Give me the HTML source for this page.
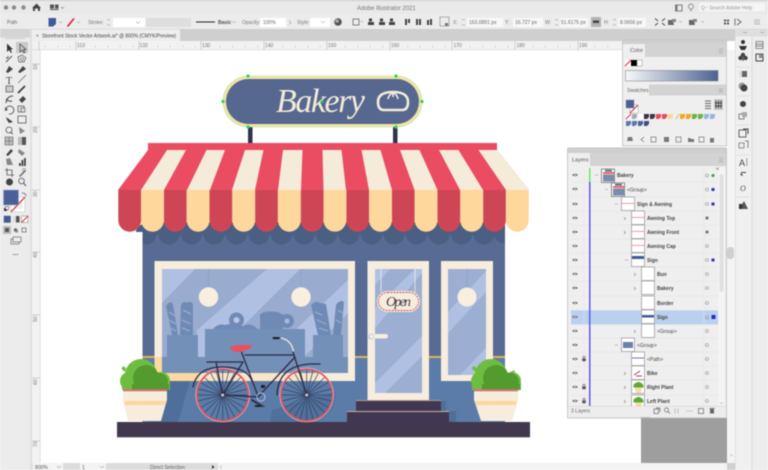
<!DOCTYPE html>
<html><head><meta charset="utf-8"><style>
html,body{margin:0;padding:0;background:#fff;width:768px;height:470px;overflow:hidden}
svg{display:block;filter:blur(.45px)}
text{font-family:"Liberation Sans",sans-serif}
.t{font-size:5px;fill:#666}
.l{font-size:5px;fill:#444;font-weight:bold}
.r{font-size:5px;fill:#777}
.ic{fill:#444}
</style></head><body>
<svg width="768" height="470" viewBox="0 0 768 470" xmlns="http://www.w3.org/2000/svg">
<defs>
<g id="eye"><path d="M-3 0Q0-2.400 3 0Q0 2.400-3 0Z" fill="#666"/><circle r=".8" fill="#eee"/></g>
<g id="lock"><rect x="-1.800" y="-.6" width="3.600" height="2.800" fill="#555"/><path d="M-1.100-.6V-1.600A1.100 1.100 0 0 1 1.100-1.600V-.6" fill="none" stroke="#555" stroke-width=".6"/></g>
<circle id="o" r="1.500" fill="none" stroke="#888" stroke-width=".6"/>
<g id="thA"><rect x="-.5" y="0" width="13" height="13.500" fill="#fff" stroke="#8a8a8a" stroke-width="1"/><rect x="1" y="3" width="11" height="2" fill="#e66"/><rect x="1" y="5.500" width="11" height="7" fill="#7a8cb0"/><rect x="3" y=".8" width="7" height="1.800" fill="#56688f"/></g>
<g id="thW"><rect x="-.5" y="0" width="13" height="13.500" fill="#fff" stroke="#a8a8a8" stroke-width=".9"/></g>
<g id="thR"><rect x="-.5" y="0" width="13" height="13.500" fill="#fff" stroke="#a8a8a8" stroke-width=".9"/><rect x="0" y="6" width="12" height=".8" fill="#e88"/></g>
<g id="thP"><rect x="-.5" y="0" width="13" height="13.500" fill="#fff" stroke="#a8a8a8" stroke-width=".9"/><path d="M1.500 7.500Q1 3 4 3Q6 1 8.500 2.500Q12 4 11.500 7.500Z" fill="#5fa83c"/><path d="M3 7.500H10L9 13H4Z" fill="#fbdca0"/></g>
<clipPath id="glass1"><rect x="162" y="269" width="186" height="104"/></clipPath>
<clipPath id="glass2"><rect x="375" y="269" width="47" height="124"/></clipPath>
<clipPath id="glass3"><rect x="448" y="269" width="38" height="106"/></clipPath>
<clipPath id="pl"><rect x="100" y="340" width="100" height="50"/></clipPath>
<clipPath id="pr"><rect x="450" y="340" width="100" height="50"/></clipPath>
</defs>

<rect width="768" height="470" fill="#fff"/>

<!-- sign -->
<rect x="248" y="125" width="4.500" height="20" fill="#2f3350"/>
<rect x="393" y="125" width="4.500" height="20" fill="#2f3350"/>
<rect x="223" y="76" width="199" height="51" rx="25.500" fill="#f3e3a6" stroke="#a8e89a" stroke-width=".6"/>
<rect x="226" y="79" width="193" height="45" rx="22.500" fill="#56688f"/>
<text x="276" y="112" font-size="34" style="font-family:'Liberation Serif',serif;font-style:italic" fill="#f3ebd8" textLength="89">Bakery</text>
<path d="M384 110H402Q408 110 408 102Q408 92 393 92Q378 92 378 102Q378 110 384 110Z" fill="none" stroke="#f3ebd8" stroke-width="2.600"/>
<path d="M388 99Q389 94 393 93Q397 94 398 99M393 93V97" stroke="#f3ebd8" stroke-width="1.600" fill="none"/>
<g fill="#2fd24a"><circle cx="248" cy="76" r="1.600"/><circle cx="396" cy="76" r="1.600"/><circle cx="223" cy="101.500" r="1.600"/><circle cx="422" cy="101.500" r="1.600"/><circle cx="322" cy="101.500" r="1.400"/><circle cx="248" cy="127" r="1.600"/><circle cx="396" cy="127" r="1.600"/></g>

<!-- building -->
<rect x="142.500" y="222" width="362.500" height="200" fill="#586b95"/>
<rect x="142.500" y="357" width="362.500" height="65" fill="#5b7ca8"/>
<rect x="142.500" y="356" width="362.500" height="2" fill="#e0b45a"/>
<path d="M190 381H160L149 422H178Z" fill="#4f6e9a"/>
<g fill="#4a5f82">
<rect x="142.500" y="222" width="362.500" height="13"/>
<circle cx="146" cy="234" r="10.500"/><circle cx="169" cy="234" r="10.500"/><circle cx="191.500" cy="234" r="10.500"/><circle cx="214" cy="234" r="10.500"/><circle cx="236.500" cy="234" r="10.500"/><circle cx="259" cy="234" r="10.500"/><circle cx="281.500" cy="234" r="10.500"/><circle cx="304" cy="234" r="10.500"/><circle cx="326.500" cy="234" r="10.500"/><circle cx="349" cy="234" r="10.500"/><circle cx="371.500" cy="234" r="10.500"/><circle cx="394" cy="234" r="10.500"/><circle cx="416.500" cy="234" r="10.500"/><circle cx="439" cy="234" r="10.500"/><circle cx="461.500" cy="234" r="10.500"/><circle cx="484" cy="234" r="10.500"/><circle cx="503" cy="234" r="9"/>
</g>
<rect x="505" y="220" width="12" height="30" fill="#fff"/>
<rect x="130" y="232" width="12.500" height="20" fill="#fff"/>

<!-- awning -->
<path d="M148 143H497V150L529 190H118L148 150Z" fill="#ea4c62"/>
<g fill="#f5ebd9">
<path d="M167 150H186L164 190H141Z"/>
<path d="M206.500 150H225L210 190H187Z"/>
<path d="M245 150H263.500L255 190H232Z"/>
<path d="M283 150H302.500L301 190H278Z"/>
<path d="M322.500 150H341.500L346 190H323.500Z"/>
<path d="M361.500 150H380.500L392 190H369Z"/>
<path d="M400 150H419.500L437.500 190H414.500Z"/>
<path d="M439 150H458.500L483 190H460Z"/>
<path d="M478.500 150H497L529 190H506Z"/>
</g>
<g fill="#ce4656">
<path d="M118.300 190H141.100V220.300A11.400 11.400 0 0 1 118.300 220.300Z"/>
<path d="M163.900 190H186.700V220.300A11.400 11.400 0 0 1 163.900 220.300Z"/>
<path d="M209.500 190H232.300V220.300A11.400 11.400 0 0 1 209.500 220.300Z"/>
<path d="M255.100 190H277.900V220.300A11.400 11.400 0 0 1 255.100 220.300Z"/>
<path d="M300.700 190H323.500V220.300A11.400 11.400 0 0 1 300.700 220.300Z"/>
<path d="M346.300 190H369.100V220.300A11.400 11.400 0 0 1 346.300 220.300Z"/>
<path d="M391.900 190H414.700V220.300A11.400 11.400 0 0 1 391.900 220.300Z"/>
<path d="M437.500 190H460.300V220.300A11.400 11.400 0 0 1 437.500 220.300Z"/>
<path d="M483.100 190H505.900V220.300A11.400 11.400 0 0 1 483.100 220.300Z"/>
</g>
<g fill="#fdd79c">
<path d="M141.100 190H163.900V220.300A11.400 11.400 0 0 1 141.100 220.300Z"/>
<path d="M186.700 190H209.500V220.300A11.400 11.400 0 0 1 186.700 220.300Z"/>
<path d="M232.300 190H255.100V220.300A11.400 11.400 0 0 1 232.300 220.300Z"/>
<path d="M277.900 190H300.700V220.300A11.400 11.400 0 0 1 277.900 220.300Z"/>
<path d="M323.500 190H346.300V220.300A11.400 11.400 0 0 1 323.500 220.300Z"/>
<path d="M369.100 190H391.900V220.300A11.400 11.400 0 0 1 369.100 220.300Z"/>
<path d="M414.700 190H437.500V220.300A11.400 11.400 0 0 1 414.700 220.300Z"/>
<path d="M460.300 190H483.100V220.300A11.400 11.400 0 0 1 460.300 220.300Z"/>
<path d="M505.900 190H528.700V220.300A11.400 11.400 0 0 1 505.900 220.300Z"/>
</g>

<!-- main window -->
<rect x="154.500" y="261" width="200.500" height="120" fill="#f6eddd"/>
<path d="M154.500 357H162V373H200V381H154.500Z" fill="#fdd9a0"/>
<rect x="200" y="373" width="120" height="8" fill="#f9e6c6"/>
<g clip-path="url(#glass1)">
<rect x="162" y="269" width="186" height="104" fill="#99acd0"/>
<path d="M162 269H195L162 303Z" fill="#b0c0e3"/>
<path d="M267 269H300L197 372V330Z" fill="#b0c0e3"/>
<path d="M348 280V313L300 361H290V335Z" fill="#b0c0e3"/>
<g fill="#6f8bb5">
<path d="M166 306Q170 300 173 304L178 335H172Z"/>
<path d="M181 305Q184 300 187 303Q190 300 193 304V335H180Z"/>
<path d="M311 305Q316 300 320 303L326 304L331 335H318Z"/>
<path d="M336 305Q340 299 344 302L341 335H333Z"/>
<circle cx="236.500" cy="320" r="7.500"/>
<path d="M213 329Q218 323 225 325Q234 322 243 326Q250 322 258 329Z"/>
<path d="M260 314H283V329H260Z"/>
<ellipse cx="271" cy="314" rx="10" ry="2.500"/>
<circle cx="287" cy="321" r="7"/>
</g>
<circle cx="236.500" cy="320" r="3" fill="#b9c7e4"/><circle cx="287" cy="321" r="2.500" fill="#a8b9da"/>
<path d="M169 312L175 316M169 320L176 324M170 328L176 331M183 310L191 314M182 320L191 324M182 328L190 331M315 312L322 315M317 320L326 324M319 328L328 331M338 310L343 313M336 320L341 323" stroke="#93a8cd" stroke-width="1.400"/>
<g fill="#7390b9">
<rect x="167" y="335" width="31" height="27"/>
<rect x="205" y="329" width="100" height="33"/>
<rect x="313" y="335" width="30" height="27"/>
<rect x="162" y="357" width="186" height="16"/>
</g>
<path d="M208.500 269V290M301 269V290" stroke="#8ea1c4" stroke-width=".7"/>
<circle cx="208.500" cy="297" r="9.700" fill="#f8efdf"/>
<circle cx="301" cy="297" r="9.700" fill="#f8efdf"/>
</g>

<!-- door -->
<rect x="367.500" y="261" width="61.500" height="140" fill="#f6eddd"/>
<g clip-path="url(#glass2)">
<rect x="375" y="269" width="47" height="124" fill="#9cafd3"/>
<path d="M375 269H390L375 285ZM415 269H422V273L375 328V308Z" fill="#b0c0e3"/>
<path d="M422 336V356L385 393H375V383Z" fill="#b0c0e3"/>
</g>
<path d="M381 269V292M415 269V292" stroke="#f6eddd" stroke-width=".8"/>
<rect x="377" y="291" width="43" height="21" rx="10.500" fill="#f6eddd"/>
<rect x="378.500" y="292.500" width="40" height="18" rx="9" fill="none" stroke="#d2495c" stroke-width=".9" stroke-dasharray="2 1"/>
<text x="398.500" y="306" text-anchor="middle" font-size="14" style="font-family:'Liberation Serif',serif;font-style:italic" fill="#4a4050" textLength="25">Open</text>
<rect x="369" y="334" width="19" height="4.500" rx="2.200" fill="#f6eddd"/>
<circle cx="371" cy="336.500" r="3" fill="#c5d0ea"/>
<circle cx="371.500" cy="336.500" r="1.800" fill="#f6eddd"/>

<!-- right window -->
<rect x="441" y="261" width="52" height="120" fill="#f6eddd"/>
<g clip-path="url(#glass3)">
<rect x="448" y="269" width="38" height="106" fill="#9cafd3"/>
<path d="M486 271V292L448 333V312Z" fill="#b0c0e3"/>
<path d="M486 348V362L473 375H460Z" fill="#b0c0e3"/>
</g>
<path d="M467 269V288" stroke="#8ea1c4" stroke-width=".7"/>
<circle cx="467" cy="297" r="9.500" fill="#f8efdf"/>

<!-- steps -->
<rect x="440" y="401" width="6" height="11" fill="#4f6e9a"/>
<rect x="449" y="411" width="7" height="11" fill="#4f6e9a"/>
<rect x="356" y="400" width="85" height="11" fill="#413752"/>
<rect x="356" y="400" width="85" height="1" fill="#b59b85"/>
<rect x="347" y="411" width="102" height="11" fill="#413752"/>
<rect x="347" y="411" width="102" height="1" fill="#c9ae93"/>
<rect x="117" y="422" width="413" height="15" fill="#41374f"/>
<rect x="117" y="437" width="413" height=".7" fill="#aaa"/>

<!-- bike shadow -->
<path d="M335 392A26 26 0 0 1 320 419L300 422H270L272 410Z" fill="#50709c"/>
<!-- bike -->
<g fill="none" stroke-linecap="round">
<g stroke="#34405f" stroke-width=".7">
<path d="M222.700 395L222.700 370M222.700 395L235 372M222.700 395L245 382M222.700 395L248.500 395M222.700 395L245 408M222.700 395L235 418M222.700 395V420M222.700 395L210 418M222.700 395L200 408M222.700 395H197M222.700 395L200 382M222.700 395L210 372"/>
<path d="M222.700 395L229 370.500M222.700 395L241 377M222.700 395L247.500 389M222.700 395L247.500 401M222.700 395L241 413M222.700 395L229 419.500M222.700 395L216 419.500M222.700 395L204 413M222.700 395L198 401M222.700 395L198 389M222.700 395L204 377M222.700 395L216 370.500"/>
<path d="M306.700 395V370M306.700 395L319 372M306.700 395L329 382M306.700 395H332M306.700 395L329 408M306.700 395L319 418M306.700 395V420M306.700 395L294 418M306.700 395L284 408M306.700 395H281M306.700 395L284 382M306.700 395L294 372"/>
<path d="M306.700 395L313 370.500M306.700 395L325 377M306.700 395L331.500 389M306.700 395L331.500 401M306.700 395L325 413M306.700 395L313 419.500M306.700 395L300 419.500M306.700 395L288 413M306.700 395L282 401M306.700 395L282 389M306.700 395L288 377M306.700 395L300 370.500"/>
</g>
<circle cx="222.700" cy="395" r="25.800" stroke="#e8505f" stroke-width="1.700"/>
<circle cx="306.700" cy="395" r="25.800" stroke="#e8505f" stroke-width="1.700"/>
<circle cx="222.700" cy="395" r="27" stroke="#f3e6d6" stroke-width=".5"/>
<circle cx="306.700" cy="395" r="27" stroke="#f3e6d6" stroke-width=".5"/>
<g stroke="#2c2a45" stroke-width="1.300">
<path d="M193 387Q197 367 222 367Q247 367 252 381"/>
<path d="M277 395Q278 366 310 364Q316 364 320 364"/>
<path d="M207 362H243"/>
<path d="M216 362L222.700 395M243 362L222.700 395"/>
<path d="M241.500 352L258 396"/>
<path d="M245 355H294"/>
<path d="M293 352L306.700 395"/>
<path d="M295 357L258 397"/>
<path d="M222.700 395L258 397"/>
<path d="M273 338H281"/>
</g>
<path d="M281 338Q291 340 293.500 351" stroke="#f3ebd8" stroke-width="1.300"/>
<path d="M252 400L262 406H257" stroke="#2c2a45" stroke-width="1.800"/>
<circle cx="261" cy="397" r="4" stroke="#b6c2da" stroke-width="1" stroke-dasharray="1 .8"/>
</g>
<path d="M230 347Q238 344 252.500 345Q251 349 246 350Q244 352 238 352Q231 352 230 347Z" fill="#e9505f"/>
<circle cx="222.700" cy="395" r="1.500" fill="#ccc"/><circle cx="306.700" cy="395" r="1.500" fill="#ccc"/>
<rect x="273" y="337" width="6" height="2.200" fill="#222"/>
<rect x="255" y="405" width="5" height="2" fill="#222"/>
<rect x="261" y="385" width="4" height="3" fill="#222"/>

<!-- left plant -->
<g clip-path="url(#pl)">
<g fill="#6fbd40"><circle cx="141" cy="375" r="16"/><circle cx="129" cy="381" r="9"/><circle cx="161" cy="381" r="9"/><rect x="122" y="382" width="48" height="8"/></g>
<g fill="#539a2f"><circle cx="146" cy="378" r="13"/><circle cx="159" cy="382" r="9"/><rect x="132" y="384" width="37" height="6"/></g>
</g>
<path d="M121.500 369L125 372L126 368L123 366Z" fill="#6fbd40"/>
<path d="M123 390H167V400L161 421H128L123 400Z" fill="#f6eddd"/>
<rect x="123" y="389.500" width="44" height="1.800" fill="#e8697a"/>
<path d="M124 401H166L165 405H125Z" fill="#fdd79c"/>

<!-- right plant -->
<g clip-path="url(#pr)">
<g fill="#6fbd40"><circle cx="491" cy="375" r="16"/><circle cx="480" cy="381" r="9"/><circle cx="512" cy="381" r="9"/><rect x="472" y="382" width="49" height="8"/></g>
<g fill="#539a2f"><circle cx="496" cy="378" r="13"/><circle cx="510" cy="382" r="9"/><rect x="482" y="384" width="38" height="6"/></g>
</g>
<path d="M472 369L476 372L477 368L473 366ZM510 372L515 370L514 374Z" fill="#6fbd40"/>
<path d="M474 390H518V400L512 421H481L474 400Z" fill="#f6eddd"/>
<rect x="474" y="389.500" width="44" height="1.800" fill="#e8697a"/>
<path d="M475 401H517L516 405H476Z" fill="#fdd79c"/>

<rect x="641" y="418" width="86" height="45" fill="#9e9e9e"/>

<!-- top chrome -->
<rect width="768" height="14" fill="#e9e9e9"/>
<rect width="768" height=".8" fill="#bbb"/>
<circle cx="6" cy="7.500" r="2.200" fill="#8a8a8a"/><circle cx="14" cy="7.500" r="2.200" fill="#8a8a8a"/><circle cx="23.500" cy="7.500" r="2.200" fill="#8a8a8a"/>
<path d="M36.500 3.500L41 8H40V11H38V8.500H35V11H33V8H32Z" fill="#444"/>
<rect x="50" y="4.500" width="4" height="4" fill="#555"/><rect x="55" y="4.500" width="3.500" height="4" fill="#555"/><rect x="50" y="9" width="8.500" height="1" fill="#555"/>
<path d="M61 7L62.500 8.500L64 7" fill="none" stroke="#777" stroke-width=".6"/>
<text x="357" y="10" font-size="6" fill="#777">Adobe Illustrator 2021</text>
<rect x="675.500" y="5" width="6.500" height="6" fill="none" stroke="#666" stroke-width=".8"/><rect x="675.500" y="5" width="2" height="6" fill="#777"/>
<circle cx="691" cy="6.500" r="2.500" fill="none" stroke="#777" stroke-width=".7"/><path d="M690 10.500H692" stroke="#777" stroke-width=".8"/>
<rect x="699" y="3" width="66" height="8.500" rx="1" fill="#f5f5f5"/>
<text x="701" y="9.500" font-size="5" fill="#999">Q~ Search Adobe Help</text>

<rect y="14" width="768" height="15" fill="#ececec"/>
<rect y="29" width="768" height=".5" fill="#ccc"/>
<text x="7" y="24" class="t">Path</text>
<path d="M48.500 18H56V24L53 26.500H48.500Z" fill="#3f5a9a"/>
<path d="M59 21.500L60.500 23L62 21.500M77 21.500L78.500 23L80 21.500" fill="none" stroke="#888" stroke-width=".5"/>
<path d="M67.500 26.500L74 18.500" stroke="#d22a3a" stroke-width="1.700"/>
<text x="88" y="24" class="r">Stroke:</text>
<path d="M107 20.500L108.500 19L110 20.500M107 24L108.500 25.500L110 24" fill="none" stroke="#888" stroke-width=".5"/>
<rect x="113" y="18" width="32" height="9" fill="#fff"/>
<path d="M136 21.500L138 23.500L140 21.500" fill="none" stroke="#777" stroke-width=".5"/>
<rect x="146" y="18" width="45" height="9" fill="#dedede"/>
<path d="M196 22H215" stroke="#222" stroke-width=".9"/>
<text x="218" y="24" font-size="5" font-weight="bold" fill="#555">Basic</text>
<path d="M232 21L234 23L236 21" fill="none" stroke="#888" stroke-width=".5"/>
<text x="242" y="24" class="r">Opacity:</text>
<rect x="260" y="18" width="26" height="9" fill="#fff"/>
<text x="263" y="24" class="t">100%</text>
<path d="M289 20.500L291 22.500L289 24.500" fill="none" stroke="#666" stroke-width=".5"/>
<text x="297" y="24" class="r">Style:</text>
<rect x="310" y="18" width="20" height="9" fill="#fff"/>
<path d="M321 21L323 23L325 21" fill="none" stroke="#888" stroke-width=".5"/>
<circle cx="338" cy="22" r="3.800" fill="#555"/><circle cx="337" cy="21" r="1.800" fill="#aaa"/>
<rect x="353" y="19" width="6" height="6" fill="none" stroke="#555" stroke-width=".7"/><path d="M361 21L362 22L363 21" stroke="#777" stroke-width=".5" fill="none"/>
<g fill="#444"><rect x="369" y="18.500" width="3" height="3"/><rect x="368" y="22" width="6" height="3"/><rect x="380" y="18.500" width="3" height="3"/><rect x="379" y="22" width="6" height="3"/><rect x="390" y="18.500" width="3" height="3"/><rect x="389" y="22" width="6" height="3"/>
<rect x="405" y="19" width="2" height="6"/><rect x="408" y="19" width="2" height="4"/><rect x="416" y="19" width="2" height="6"/><rect x="419" y="19" width="2" height="6"/><rect x="427" y="20" width="2" height="5"/><rect x="430" y="19" width="2" height="6"/></g>
<rect x="440" y="17" width="9" height="9" fill="none" stroke="#777" stroke-width=".8" stroke-dasharray="1.500 .6"/><rect x="445" y="23" width="3" height="3" fill="#777"/>
<text x="453" y="24" class="r">X:</text>
<path d="M462 20.500L463.500 19L465 20.500M462 24L463.500 25.500L465 24" fill="none" stroke="#888" stroke-width=".5"/>
<rect x="467" y="18" width="36" height="9" fill="#f8f8f8"/><text x="469" y="24" class="t">163.0891 px</text>
<text x="499" y="24" class="r"> </text>
<text x="505" y="24" class="r">Y:</text>
<rect x="513" y="18" width="30" height="9" fill="#f8f8f8"/><text x="515" y="24" class="t">16.727 px</text>
<text x="545" y="24" class="r">W:</text>
<path d="M555 20.500L556.500 19L558 20.500M555 24L556.500 25.500L558 24" fill="none" stroke="#888" stroke-width=".5"/>
<rect x="560" y="18" width="28" height="9" fill="#f8f8f8"/><text x="561" y="24" class="t">51.6175 px</text>
<rect x="591" y="17" width="10" height="10" fill="#b3b3b3"/><rect x="593" y="20.500" width="6" height="2.500" fill="#444"/>
<text x="604" y="24" class="r">H:</text>
<path d="M613 20.500L614.500 19L616 20.500M613 24L614.500 25.500L616 24" fill="none" stroke="#888" stroke-width=".5"/>
<rect x="618" y="18" width="28" height="9" fill="#f8f8f8"/><text x="620" y="24" class="t">8.0656 px</text>
<path d="M655 18.500L658 21M665 18.500L662 21M655 25.500L658 23M665 25.500L662 23" stroke="#444" stroke-width=".9"/>
<path d="M668 20H673L674 25H668Z" fill="#666"/><rect x="672" y="19" width="4" height="3" fill="#888"/><path d="M679 21L680.500 22.500L682 21" fill="none" stroke="#888" stroke-width=".5"/>
<path d="M689 20H694L695 25H689Z" fill="#666"/><rect x="693" y="19" width="4" height="3" fill="#888"/><path d="M701 21L702.500 22.500L704 21" fill="none" stroke="#888" stroke-width=".5"/>
<g fill="#555"><rect x="724" y="19.500" width="2" height="2"/><rect x="727" y="19.500" width="2" height="2"/><rect x="724" y="22.500" width="2" height="2"/><rect x="727" y="22.500" width="2" height="2"/></g>
<path d="M735 18.500V25.500M737 19L741 22L737 25" fill="none" stroke="#555" stroke-width=".8"/>
<path d="M754 20H760M754 22H760M754 24H760" stroke="#888" stroke-width=".6"/>

<!-- tab bar -->
<rect y="29.500" width="768" height="11.500" fill="#cfcfcf"/>
<rect x="32" y="29.500" width="148" height="11.500" fill="#eeeeee"/>
<text x="36" y="37.500" font-size="5" fill="#555">×</text>
<text x="42" y="37.500" font-size="5" fill="#444" textLength="134">Storefront Stock Vector Artwork.ai* @ 800% (CMYK/Preview)</text>

<!-- ruler h -->
<rect x="32" y="41" width="695" height="9" fill="#f2f2f2"/>
<rect x="32" y="49.500" width="695" height=".5" fill="#ccc"/>
<g font-size="5" fill="#777">
<text x="77" y="47">110</text><text x="139.500" y="47">120</text><text x="202" y="47">130</text><text x="265" y="47">140</text><text x="328" y="47">150</text><text x="391" y="47">160</text><text x="453.500" y="47">170</text><text x="516.500" y="47">180</text><text x="579" y="47">190</text>
</g>
<path d="M39 41V50M76 41V50M139 41V50M201 41V50M264 41V50M327 41V50M390 41V50M452 41V50M515 41V50M578 41V50" stroke="#aaa" stroke-width=".5"/>
<path d="M45 46.500H620" stroke="#aaa" stroke-width="1.400" stroke-dasharray=".5 12"/>

<!-- left tools -->
<rect x="0" y="29.500" width="32" height="441" fill="#ececec"/>
<rect x="30" y="29.500" width="2" height="441" fill="#dfdfdf"/>
<rect x="0" y="29.500" width="30" height="8" fill="#d4d4d4"/>
<rect x="5" y="38" width="20" height="1" fill="#ccc"/>
<rect x="32" y="50" width="8" height="413" fill="#f2f2f2"/>
<rect x="40" y="50" width=".5" height="413" fill="#ccc"/>
<g font-size="5" fill="#777">
<text transform="translate(37 70) rotate(-90)">10</text><text transform="translate(37 133) rotate(-90)">20</text><text transform="translate(37 197) rotate(-90)">30</text><text transform="translate(37 258) rotate(-90)">40</text><text transform="translate(37 322) rotate(-90)">50</text><text transform="translate(37 385) rotate(-90)">60</text><text transform="translate(37 447) rotate(-90)">70</text>
</g>
<path d="M32 64H40M32 127H40M32 190H40M32 252H40M32 315H40M32 378H40M32 441H40" stroke="#aaa" stroke-width=".5"/>
<rect x="16" y="42" width="12" height="11" fill="#c9c9c9"/>
<path d="M7 43.500V52L9 50L11 53L12 52.500L10.500 49.500H13Z" fill="#333"/>
<path d="M20 44V52L22 50L24 53L25 52.500L23.500 49.500H26Z" fill="none" stroke="#444" stroke-width=".7"/>
<g fill="none" stroke="#555" stroke-width=".9">
<path d="M6 62L12 56M8 56L8 58M6 58H8"/>
<path d="M18 57L22 55L26 58L24 62H19Z" stroke-width=".7"/><circle cx="22" cy="59" r="1.500" stroke-width=".6"/>
</g>
<path d="M6 72L9 66L13 69L8 73Z" class="ic"/><path d="M18 72L23 66L26 69L20 73Z" class="ic"/>
<text x="6" y="84" font-size="10" fill="#444" style="font-family:'Liberation Serif',serif">T</text>
<path d="M18 83L26 75" stroke="#666" stroke-width=".7"/>
<rect x="6" y="86" width="7" height="6" fill="#ccc" stroke="#555" stroke-width=".7"/>
<path d="M18 93L25 86" stroke="#333" stroke-width="1.600"/>
<path d="M6 103Q7 96 13 96M6 99Q9 102 12 101" fill="none" stroke="#444" stroke-width="1"/>
<path d="M19 100L23 96L26 99L22 103Z" class="ic"/>
<path d="M6 109A4 4 0 1 1 9 114" fill="none" stroke="#555" stroke-width=".9"/><path d="M5 107L8 110L5 111Z" fill="#555"/>
<rect x="18" y="106" width="6" height="6" fill="#ddd" stroke="#555" stroke-width=".7"/><rect x="21" y="108" width="4" height="4" fill="#ddd" stroke="#555" stroke-width=".6"/>
<path d="M6 117L13 122L9 123L7 120Z" class="ic"/><rect x="18" y="116" width="8" height="7" fill="#eee" stroke="#444" stroke-width=".7"/>
<circle cx="9" cy="130" r="3" fill="none" stroke="#555" stroke-width=".8"/><path d="M10 132L13 134" stroke="#555"/>
<path d="M19 127L25 131L20 134Z" fill="#888"/>
<rect x="5" y="137" width="8" height="8" fill="#bbb" stroke="#555" stroke-width=".5"/><path d="M9 137V145M5 141H13" stroke="#555" stroke-width=".4"/>
<rect x="18" y="137" width="8" height="8" fill="#555"/><rect x="18" y="137" width="4" height="8" fill="#bbb"/>
<path d="M6 155L11 149L13 151L8 156Z" class="ic"/><path d="M19 149L25 153L22 156L18 152Z" fill="#888"/>
<path d="M6 159L10 158L13 165H7Z" fill="#888"/><rect x="19" y="163" width="1.800" height="3" class="ic"/><rect x="21.500" y="160" width="1.800" height="6" class="ic"/><rect x="24" y="158" width="1.800" height="8" class="ic"/>
<path d="M7 168V175H14M5 170H12V177" fill="none" stroke="#555" stroke-width=".8"/>
<path d="M19 176L25 170L26 171L20 177Z" fill="#666"/><circle cx="24" cy="170" r="1.500" fill="none" stroke="#555" stroke-width=".5"/>
<circle cx="9.500" cy="182" r="3.500" class="ic"/><circle cx="21.500" cy="181" r="2.800" fill="none" stroke="#555" stroke-width=".8"/><path d="M23.500 183L26 186" stroke="#555"/>
<rect x="11" y="197" width="14" height="15" fill="#fff" stroke="#bbb" stroke-width=".5"/>
<rect x="13.500" y="200" width="9" height="9" fill="#eee"/>
<path d="M11 212L25 197" stroke="#d42a3a" stroke-width="1.200"/>
<rect x="3.500" y="190" width="15" height="15" fill="#4a6099" stroke="#aaa" stroke-width=".4"/>
<path d="M22 193Q26 193 26 196" fill="none" stroke="#555" stroke-width=".8"/>
<rect x="4" y="208" width="3" height="3" fill="#333"/><rect x="5.500" y="206.500" width="3" height="3" fill="#fff" stroke="#333" stroke-width=".5"/>
<rect x="4" y="216" width="6.500" height="6.500" fill="#3f5a9a" stroke="#555" stroke-width=".4"/>
<rect x="13" y="216" width="6.500" height="6.500" fill="#555"/><rect x="13" y="216" width="3" height="6.500" fill="#ddd"/>
<rect x="21.500" y="216" width="6.500" height="6.500" fill="#fff" stroke="#555" stroke-width=".4"/><path d="M21.500 222.500L28 216" stroke="#d42a3a" stroke-width="1"/>
<rect x="3" y="226" width="8" height="8" fill="#bbb"/><rect x="5" y="228" width="4" height="4" fill="#555"/>
<circle cx="15.500" cy="230" r="1.700" fill="#666"/><rect x="15.500" y="230" width="2.500" height="2.500" fill="#888"/>
<rect x="22" y="228" width="4" height="4" fill="none" stroke="#666" stroke-width=".7"/>
<rect x="11" y="239" width="8" height="5" fill="none" stroke="#555" stroke-width=".6"/><rect x="13" y="237" width="8" height="5" fill="#ececec" stroke="#555" stroke-width=".6"/>
<path d="M13 254.500H19" stroke="#555" stroke-width="1" stroke-dasharray="1 1"/>

<!-- bottom status -->
<rect x="32" y="463" width="736" height="7" fill="#f3f3f3"/>
<rect x="32" y="463" width="186" height="7" fill="#dcdcdc"/>
<rect x="33" y="463" width="30" height="7" fill="#f4f4f4"/>
<text x="35" y="469" font-size="5" fill="#555">800%</text>
<path d="M57 466L59 468L61 466" fill="none" stroke="#777" stroke-width=".5"/>
<rect x="80" y="463" width="26" height="7" fill="#f4f4f4"/>
<text x="82" y="469" font-size="5" fill="#555">1</text>
<path d="M100 466L102 468L104 466" fill="none" stroke="#777" stroke-width=".5"/>
<text x="150" y="469" font-size="5" fill="#666">Direct Selection</text>
<path d="M212 465L214.500 467L212 469Z" fill="#333"/>
<path d="M222 465L220 467L222 469" fill="none" stroke="#999" stroke-width=".5"/>

<!-- right scrollbar -->
<rect x="727" y="50" width="8" height="420" fill="#f4f4f4"/>
<rect x="727" y="247" width="7" height="12" rx="3" fill="#cfcfcf"/>
<rect x="727" y="463" width="8" height="7" fill="#d0d0d0"/>
<path d="M730 456L731.500 454.500L733 456" fill="none" stroke="#999" stroke-width=".5"/>

<!-- right dock -->
<rect x="735" y="29.500" width="33" height="441" fill="#ededed"/>
<rect x="735" y="29.500" width="17" height="441" fill="#f0f0f0"/>
<rect x="735" y="29.500" width=".6" height="441" fill="#d8d8d8"/>
<rect x="751.500" y="29.500" width=".8" height="441" fill="#d5d5d5"/>
<rect x="735" y="29.500" width="33" height="7" fill="#dedede"/>
<path d="M743 32.500H747M760 32.500H764" stroke="#888" stroke-width=".5"/>
<g class="ic">
<circle cx="743" cy="42" r="2" fill="#333"/><path d="M739 46L747 46L745 50H741Z" fill="#333"/>
<circle cx="743" cy="55" r="2.200" fill="#444"/><circle cx="740.500" cy="58" r="2.200" fill="#444"/><circle cx="745.500" cy="58" r="2.200" fill="#444"/><rect x="742.500" y="58" width="1" height="3" fill="#444"/>
<rect x="739" y="71" width="8" height="6" fill="#666"/><rect x="739" y="71" width="3" height="6" fill="#ddd"/>
<circle cx="742" cy="86" r="3.500" fill="#999"/><circle cx="744" cy="88" r="3.500" fill="#444"/>
<circle cx="743" cy="104" r="3" fill="#444"/>
<rect x="739" y="114" width="5" height="5" fill="none" stroke="#555" stroke-width=".7"/><rect x="742" y="112" width="5" height="5" fill="#aaa"/>
<rect x="739" y="130" width="7" height="7" fill="none" stroke="#444" stroke-width=".8"/><path d="M743 129L748 129V134" fill="none" stroke="#444"/>
<path d="M745 141H748V148" fill="none" stroke="#555" stroke-width=".7"/>
<rect x="739" y="143" width="5" height="5" fill="none" stroke="#666" stroke-width=".7"/>
</g>
<text x="739" y="166" font-size="9" fill="#444">A</text>
<rect x="746.500" y="158" width=".6" height="8" fill="#666"/>
<path d="M745 172V178M741 172H746V173H741Q739 175 743 176Z" fill="#444"/>
<text x="740" y="191" font-size="8" fill="#555" style="font-family:'Liberation Serif',serif;font-style:italic">O</text>
<path d="M739 209L744 201L748 209Z" fill="#555"/><rect x="739" y="204" width="3" height="5" fill="#333"/>
<g stroke="#ccc" stroke-width=".5"><path d="M737 67H749M737 96H749M737 125H749M737 155H749M737 197H749"/></g>
<g fill="none" stroke="#666" stroke-width=".7"><rect x="756" y="41.500" width="7" height="7"/><path d="M756 44H763M756 46H763"/></g>
<rect x="756" y="54" width="7" height="7" fill="none" stroke="#333" stroke-width=".9"/><rect x="759" y="54" width="4" height="4" fill="#888"/>

<!-- Color / Swatches panel -->
<rect x="622.500" y="40" width="104" height="106" fill="#efefef" stroke="#bbb" stroke-width=".7"/>
<rect x="623" y="40" width="103" height="4" fill="#cfcfcf"/>
<rect x="623" y="44" width="103" height="13" fill="#d3d3d3"/>
<rect x="623" y="44" width="22" height="13" fill="#efefef"/>
<text x="630" y="52" font-size="5.500" fill="#555">Color</text>
<path d="M719 49H723M719 51H723M719 53H723" stroke="#999" stroke-width=".5"/>
<rect x="625" y="60" width="6" height="6" fill="#fff"/><path d="M625 66L631 60" stroke="#d42a3a" stroke-width="1"/>
<rect x="631" y="60" width="6" height="6" fill="#000"/>
<rect x="637" y="60" width="5" height="6" fill="#fff" stroke="#777" stroke-width=".4"/>
<linearGradient id="cg" x1="0" x2="1"><stop offset="0" stop-color="#f8f8fb"/><stop offset=".5" stop-color="#a3aec6"/><stop offset="1" stop-color="#4d6392"/></linearGradient>
<rect x="625.500" y="70.500" width="92.500" height="10.500" fill="url(#cg)" stroke="#777" stroke-width=".5"/>
<rect x="623" y="84.500" width="103" height="11" fill="#d3d3d3"/>
<rect x="623" y="84.500" width="26" height="11" fill="#efefef"/>
<text x="627" y="92" font-size="5" fill="#666">Swatches</text>
<path d="M719 89H723M719 90.500H723M719 92H723" stroke="#999" stroke-width=".5"/>
<rect x="630" y="105" width="8" height="8" fill="#fff" stroke="#888" stroke-width=".4"/><path d="M630 113L638 105" stroke="#d42a3a" stroke-width="1"/>
<rect x="626" y="100" width="8" height="8" fill="#4a6099" stroke="#888" stroke-width=".4"/>
<path d="M705 101H711M705 103.500H711M705 106H711M705 108.500H711" stroke="#666" stroke-width=".9"/>
<rect x="714" y="99" width="9" height="11" fill="#c8c8c8"/>
<path d="M716 100.500V108.500M718.500 100.500V108.500M721 100.500V108.500M715 103H722M715 106H722" stroke="#444" stroke-width=".9"/>
<rect x="626" y="114" width="5" height="5" fill="#fff"/><path d="M626 119L631 114" stroke="#d42a3a" stroke-width=".9"/>
<path d="M632 114H637V117L635 119H632Z" fill="#aaa"/>
<rect x="638" y="114" width="5" height="5" fill="#fff"/>
<g>
<path d="M644 114H649V117L647 119H644Z" fill="#3b3347"/><path d="M650 114H655V117L653 119H650Z" fill="#3b3347"/>
<path d="M656 114H661V117L659 119H656Z" fill="#e84a5f"/><path d="M662 114H667V117L665 119H662Z" fill="#e84a5f"/>
<path d="M668 114H673V117L671 119H668Z" fill="#fdd79c"/>
<path d="M676 119L679 114" stroke="#c8a040" stroke-width=".7"/>
<path d="M680 114H685V117L683 119H680Z" fill="#f5a623"/><path d="M686 114H691V117L689 119H686Z" fill="#f5a623"/>
<path d="M692 114H697V117L695 119H692Z" fill="#6cb33f"/><path d="M698 114H703V117L701 119H698Z" fill="#6cb33f"/>
<path d="M704 114H709V117L707 119H704Z" fill="#9ab3dd"/><path d="M710 114H715V117L713 119H710Z" fill="#9ab3dd"/>
<path d="M626 121H631V124L629 126H626Z" fill="#5a78b0"/><path d="M632 121H637V124L635 126H632Z" fill="#5a78b0"/>
<path d="M638 121H643V124L641 126H638Z" fill="#4a6296"/><path d="M644 121H649V124L647 126H644Z" fill="#3c4f7e"/>
</g>
<g fill="#777">
<path d="M628 137L632 137L633 141H627Z"/><path d="M644 137L641 139.500L644 142" fill="none" stroke="#777" stroke-width=".8"/>
<rect x="651" y="137" width="5" height="5" fill="none" stroke="#777" stroke-width=".7"/>
<rect x="664" y="137" width="5" height="5"/><rect x="676" y="137" width="5" height="5" fill="none" stroke="#777" stroke-width=".7"/>
<path d="M688 138H690L691 139H694V142H688Z"/><rect x="699" y="137" width="5" height="5" fill="none" stroke="#777" stroke-width=".7"/>
<rect x="710" y="138" width="4" height="4.500"/>
</g>

<!-- Layers panel -->
<rect x="567.500" y="148" width="159" height="270" rx="1" fill="#efefef" stroke="#b5b5b5" stroke-width=".7"/>
<rect x="568" y="148.500" width="158" height="4.500" fill="#cfcfcf"/>
<rect x="568" y="153" width="158" height="13" fill="#d3d3d3"/>
<rect x="568" y="153" width="22" height="13" fill="#efefef"/>
<text x="572" y="161.500" font-size="5.500" fill="#555">Layers</text>
<path d="M719 158H723M719 160H723M719 162H723" stroke="#999" stroke-width=".5"/>
<path d="M716 168L719 170M718 168L720 168.500" stroke="#555" stroke-width=".7"/>

<rect x="571" y="310.500" width="147" height="14" fill="#b9d1ee"/>
<g stroke="#e4e4e4" stroke-width=".5">
<path d="M571 182H718M571 196.500H718M571 211H718M571 225H718M571 239H718M571 253H718M571 267H718M571 281H718M571 296H718M571 310H718M571 324.500H718M571 338H718M571 352H718M571 366H718M571 380H718M571 395H718"/>
<path d="M584 168V406M704 168V406"/>
</g>
<rect x="589" y="168" width="1.500" height="14" fill="#66e866"/>
<rect x="589" y="182" width="1.500" height="224" fill="#5a5af0"/>

<use href="#eye" x="575" y="175"/><use href="#eye" x="575" y="189"/><use href="#eye" x="575" y="204"/><use href="#eye" x="575" y="218"/><use href="#eye" x="575" y="232"/><use href="#eye" x="575" y="246"/><use href="#eye" x="575" y="260"/><use href="#eye" x="575" y="274"/><use href="#eye" x="575" y="288"/><use href="#eye" x="575" y="303"/><use href="#eye" x="575" y="317"/><use href="#eye" x="575" y="331"/><use href="#eye" x="575" y="345"/><use href="#eye" x="575" y="359"/><use href="#eye" x="575" y="373"/><use href="#eye" x="575" y="387"/><use href="#eye" x="575" y="401"/>
<use href="#lock" x="584" y="359"/><use href="#lock" x="584" y="387"/><use href="#lock" x="584" y="401"/>

<use href="#thA" x="602" y="169"/><use href="#thA" x="612" y="183"/><use href="#thR" x="622" y="197"/><use href="#thR" x="632" y="211"/><use href="#thR" x="632" y="225"/><use href="#thR" x="632" y="239"/><use href="#thW" x="632" y="253"/>
<rect x="632" y="256" width="12" height="3" fill="#3f5a9a"/>
<use href="#thW" x="642" y="267"/><use href="#thW" x="642" y="281"/><use href="#thW" x="642" y="296"/><use href="#thW" x="642" y="310"/>
<rect x="642" y="315" width="12" height="2.500" fill="#3f5a9a"/>
<use href="#thW" x="642" y="324"/>
<use href="#thW" x="622" y="338"/><rect x="623" y="342" width="10" height="6" fill="#6a80ad"/>
<use href="#thW" x="632" y="352"/><path d="M632 358H644" stroke="#3f5a9a" stroke-width=".8"/>
<use href="#thW" x="632" y="366"/><path d="M634 375L640 371M636 376H642" stroke="#a36" stroke-width="1"/>
<use href="#thP" x="632" y="380"/><use href="#thP" x="632" y="395"/>

<text x="617" y="177" class="l">Bakery</text>
<text x="627" y="191.500" class="l" style="font-weight:normal">&lt;Group&gt;</text>
<text x="637" y="206" class="l">Sign &amp; Awning</text>
<text x="647" y="220" class="l">Awning Top</text>
<text x="647" y="234" class="l">Awning Front</text>
<text x="647" y="248" class="l">Awning Cap</text>
<text x="647" y="262" class="l">Sign</text>
<text x="657" y="276" class="l">Bun</text>
<text x="657" y="290" class="l">Bakery</text>
<text x="657" y="305" class="l">Border</text>
<text x="657" y="319" class="l">Sign</text>
<text x="657" y="333" class="l" style="font-weight:normal">&lt;Group&gt;</text>
<text x="637" y="347" class="l" style="font-weight:normal">&lt;Group&gt;</text>
<text x="647" y="361" class="l" style="font-weight:normal">&lt;Path&gt;</text>
<text x="647" y="375" class="l">Bike</text>
<text x="647" y="389" class="l">Right Plant</text>
<text x="647" y="403" class="l">Left Plant</text>

<g fill="none" stroke="#888" stroke-width=".6">
<path d="M595 175H598M605 189.500H608M615 204H618M625 260H628M615 345H618"/>
<path d="M624 217L625.500 218.500L624 220M624 231L625.500 232.500L624 234M634 273L635.500 274.500L634 276M634 287L635.500 288.500L634 290M634 330L635.500 331.500L634 333M624 372L625.500 373.500L624 375M624 386L625.500 387.500L624 389M624 400L625.500 401.500L624 403"/>
</g>

<use href="#o" x="707" y="175.500"/><use href="#o" x="707" y="189.500"/><use href="#o" x="707" y="204"/><use href="#o" x="707" y="246"/><use href="#o" x="707" y="260"/><use href="#o" x="707" y="274"/><use href="#o" x="707" y="288"/><use href="#o" x="707" y="303"/><use href="#o" x="707" y="317.500"/><use href="#o" x="707" y="331"/><use href="#o" x="707" y="345"/><use href="#o" x="707" y="359"/><use href="#o" x="707" y="373"/><use href="#o" x="707" y="387"/><use href="#o" x="707" y="401"/>
<circle cx="707" cy="218" r="1.600" fill="#777"/><circle cx="707" cy="232" r="1.600" fill="#777"/>
<rect x="711.500" y="174" width="3" height="3" rx="1.500" fill="#2e9e44"/>
<rect x="711.500" y="188" width="3" height="3" fill="#3535b0"/><rect x="711.500" y="202.500" width="3" height="3" fill="#3535b0"/><rect x="711.500" y="258.500" width="3" height="3" fill="#3535b0"/>
<rect x="711.500" y="315" width="4" height="4" fill="#2a2ad0"/>

<rect x="718.500" y="168" width="6" height="238" fill="#f4f4f4"/>
<rect x="719.500" y="174" width="4" height="118" rx="2" fill="#e0e0e0"/>
<path d="M720 402L721.500 404L723 402" fill="none" stroke="#aaa" stroke-width=".5"/>

<rect x="568" y="406" width="158" height="11.500" fill="#ededed"/>
<rect x="568" y="406" width="158" height=".5" fill="#ccc"/>
<text x="571" y="412.500" font-size="5" fill="#666">3 Layers</text>
<g fill="none" stroke="#666" stroke-width=".7">
<rect x="654" y="409" width="4.500" height="4.500"/><path d="M656 408H660V412"/>
<circle cx="666.500" cy="410" r="2"/><path d="M668 411.500L670 413.500"/>
<path d="M675 408.500V413.500M678 408.500V413.500" stroke="#aaa"/><path d="M686 411H693" stroke="#bbb"/>
<rect x="698.500" y="408.500" width="5" height="5"/>
</g>
<rect x="710" y="409" width="4" height="4.500" fill="#666"/><rect x="709.500" y="408" width="5" height=".8" fill="#666"/>
<rect x="640" y="417" width="10" height="1" fill="#bbb"/>
</svg>
</body></html>
